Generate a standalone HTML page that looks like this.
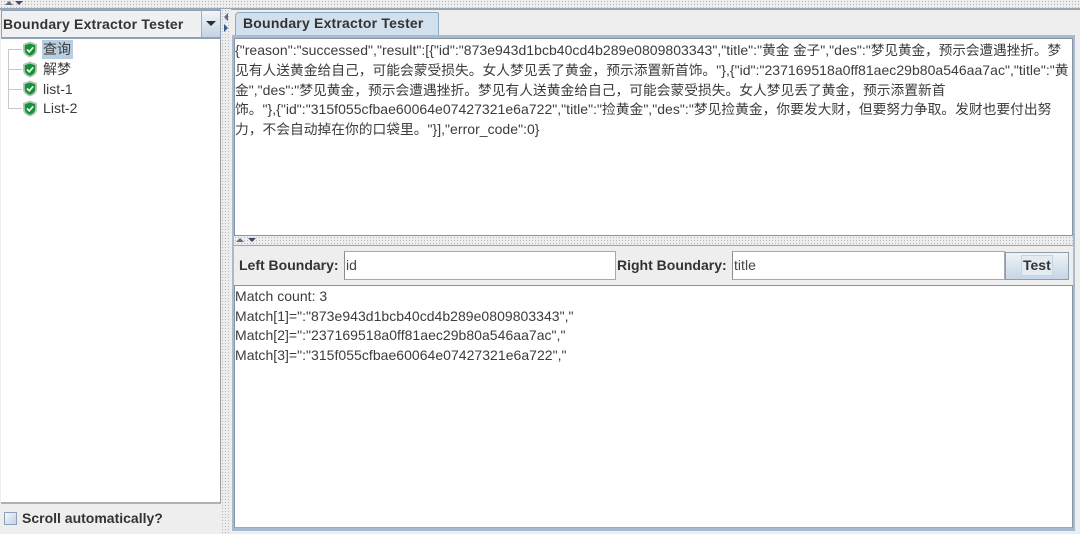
<!DOCTYPE html>
<html><head><meta charset="utf-8">
<style>
html,body{margin:0;padding:0;background:#eeeeee;}
#r{position:relative;width:1080px;height:534px;overflow:hidden;background:#eeeeee;font-family:"Liberation Sans","Noto Sans CJK SC",sans-serif;color:#3a3a3a;}
#r div{position:absolute;box-sizing:border-box;}
.t{white-space:nowrap;font-size:14px;line-height:20px;height:20px;color:#3c3c3c;letter-spacing:.03px;}
.t span{font-size:13.75px;letter-spacing:0;}
.t.a span{font-size:13.6px;}
.b{white-space:nowrap;font-weight:bold;color:#333;}
.dots{background-image:radial-gradient(#b4b8bc 0.7px,transparent 0.8px);background-size:3px 3px;background-color:#eee;}
svg{position:absolute;}
</style></head><body><div id="r">
<div class="dots" style="left:0;top:0;width:1080px;height:9px"></div>
<svg style="left:3px;top:0" width="20" height="6"><path d="M2 5L6 1L10 5Z" fill="#5d6d80"/><path d="M12 1H20L16 5Z" fill="#3d4d68"/></svg>
<div style="left:0;top:8px;width:1080px;height:2px;background:#9aa7b3"></div>
<div style="left:0;top:10px;width:232px;height:524px;background:#eee"></div>

<!-- combo -->
<div style="left:1px;top:10px;width:220px;height:29px;background:#eef0f2;border:1px solid #8ea2b6;border-bottom:2px solid #8ea2b6"></div>
<div class="b" style="left:3px;top:14px;font-size:14px;line-height:20px;letter-spacing:.2px">Boundary Extractor Tester</div>
<div style="left:201px;top:11px;width:19px;height:26px;background:linear-gradient(#f3f5f8,#c3d3e4);border-left:1px solid #9db0c2"></div>
<svg style="left:205px;top:20px" width="12" height="7"><path d="M1 1H11L6 6Z" fill="#2e2e2e"/></svg>

<!-- tree -->
<div style="left:1px;top:39px;width:220px;height:465px;background:#fff;border-right:1px solid #9b9b9b;border-bottom:2px solid #b0b0b0"></div>
<div style="left:8px;top:49px;width:1px;height:60px;background:#c8c8c8"></div>
<div style="left:8px;top:49px;width:14px;height:1px;background:#c8c8c8"></div>
<div style="left:8px;top:69px;width:14px;height:1px;background:#c8c8c8"></div>
<div style="left:8px;top:89px;width:14px;height:1px;background:#c8c8c8"></div>
<div style="left:8px;top:108px;width:14px;height:1px;background:#c8c8c8"></div>
<svg style="left:22px;top:41px" width="16" height="17" viewBox="0 0 16 17"><path d="M8 .5L15 3V9C15 13 11.500 15.500 8 16.500C4.500 15.500 1 13 1 9V3Z" fill="#b9c7b5"/><path d="M8 2.500L13.200 4.300V9C13.200 12 10.700 13.800 8 14.700C5.300 13.800 2.800 12 2.800 9V4.300Z" fill="#14923a"/><path d="M5 8.500L7.300 10.800L11.200 6.300" fill="none" stroke="#e9f7e6" stroke-width="1.800"/></svg>
<svg style="left:22px;top:61px" width="16" height="17" viewBox="0 0 16 17"><path d="M8 .5L15 3V9C15 13 11.500 15.500 8 16.500C4.500 15.500 1 13 1 9V3Z" fill="#b9c7b5"/><path d="M8 2.500L13.200 4.300V9C13.200 12 10.700 13.800 8 14.700C5.300 13.800 2.800 12 2.800 9V4.300Z" fill="#14923a"/><path d="M5 8.500L7.300 10.800L11.200 6.300" fill="none" stroke="#e9f7e6" stroke-width="1.800"/></svg>
<svg style="left:22px;top:80px" width="16" height="17" viewBox="0 0 16 17"><path d="M8 .5L15 3V9C15 13 11.500 15.500 8 16.500C4.500 15.500 1 13 1 9V3Z" fill="#b9c7b5"/><path d="M8 2.500L13.200 4.300V9C13.200 12 10.700 13.800 8 14.700C5.300 13.800 2.800 12 2.800 9V4.300Z" fill="#14923a"/><path d="M5 8.500L7.300 10.800L11.200 6.300" fill="none" stroke="#e9f7e6" stroke-width="1.800"/></svg>
<svg style="left:22px;top:100px" width="16" height="17" viewBox="0 0 16 17"><path d="M8 .5L15 3V9C15 13 11.500 15.500 8 16.500C4.500 15.500 1 13 1 9V3Z" fill="#b9c7b5"/><path d="M8 2.500L13.200 4.300V9C13.200 12 10.700 13.800 8 14.700C5.300 13.800 2.800 12 2.800 9V4.300Z" fill="#14923a"/><path d="M5 8.500L7.300 10.800L11.200 6.300" fill="none" stroke="#e9f7e6" stroke-width="1.800"/></svg>
<div style="left:42px;top:40px;width:31px;height:19px;background:#b9cde0"></div>
<div class="t" style="left:43px;top:39px">查询</div>
<div class="t" style="left:43px;top:59px">解梦</div>
<div class="t" style="left:43px;top:79px">list-1</div>
<div class="t" style="left:43px;top:98px">List-2</div>

<!-- checkbox -->
<div style="left:4px;top:512px;width:13px;height:13px;background:linear-gradient(135deg,#f4f6f9,#c4d3e6);border:1px solid #8da2b8"></div>
<div class="b" style="left:22px;top:508px;font-size:14px;line-height:20px">Scroll automatically?</div>

<!-- vertical divider -->
<div class="dots" style="left:221px;top:9px;width:10px;height:525px"></div>
<svg style="left:222px;top:12px" width="8" height="22"><path d="M6 1V9L2 5Z" fill="#5d6d80"/><path d="M2 12V20L6 16Z" fill="#3d5a90"/></svg>

<!-- tab -->
<div style="left:231px;top:10px;width:849px;height:524px;background:#eee"></div>
<div style="left:235px;top:12px;width:204px;height:25px;background:#d2e0ee;border:1px solid #8ea8c0;border-bottom:0;border-radius:4px 2px 0 0"></div>
<div class="b" style="left:243px;top:13px;font-size:14px;line-height:20px;letter-spacing:.2px">Boundary Extractor Tester</div>
<div style="left:232px;top:35px;width:843px;height:496px;border:2px solid #a6bbd0;border-top:3px solid #a6bbd0;border-bottom:3px solid #a6bbd0"></div>

<!-- text area -->
<div style="left:234px;top:38px;width:839px;height:198px;background:#fff;border:1px solid #8a949e;border-top:1px solid #8a949e"></div>
<div class="t a" style="left:235px;top:40px">{"reason":"successed","result":[{"id":"873e943d1bcb40cd4b289e0809803343","title":"<span>黄金 金子</span>","des":"<span>梦见黄金&#65292;预示会遭遇挫折。梦</span></div>
<div class="t" style="left:235px;top:60px"><span>见有人送黄金给自己&#65292;可能会蒙受损失。女人梦见丢了黄金&#65292;预示添置新首饰。</span>"},{"id":"237169518a0ff81aec29b80a546aa7ac","title":"<span>黄</span></div>
<div class="t" style="left:235px;top:80px"><span>金</span>","des":"<span>梦见黄金&#65292;预示会遭遇挫折。梦见有人送黄金给自己&#65292;可能会蒙受损失。女人梦见丢了黄金&#65292;预示添置新首</span></div>
<div class="t" style="left:235px;top:99px"><span>饰。</span>"},{"id":"315f055cfbae60064e07427321e6a722","title":"<span>捡黄金</span>","des":"<span>梦见捡黄金&#65292;你要发大财&#65292;但要努力争取。发财也要付出努</span></div>
<div class="t" style="left:235px;top:119px"><span>力&#65292;不会自动掉在你的口袋里。</span>"}],"error_code":0}</div>

<!-- splitter -->
<div class="dots" style="left:234px;top:236px;width:839px;height:9px"></div>
<svg style="left:236px;top:237px" width="24" height="6"><path d="M0 5L4 1L8 5Z" fill="#5d6d80"/><path d="M12 1H20L16 5Z" fill="#3d4d68"/></svg>
<div style="left:234px;top:245px;width:839px;height:1px;background:#9aa3ac"></div>

<!-- form row -->
<div class="b" style="left:239px;top:255px;font-size:14px;line-height:20px">Left Boundary:</div>
<div style="left:344px;top:251px;width:272px;height:29px;background:#fff;border:1px solid #a5a9ad;border-left-color:#8a8e92"></div>
<div class="t" style="left:346px;top:255px;color:#444">id</div>
<div class="b" style="left:617px;top:255px;font-size:14px;line-height:20px">Right Boundary:</div>
<div style="left:732px;top:251px;width:273px;height:29px;background:#fff;border:1px solid #a5a9ad;border-left-color:#8a8e92"></div>
<div class="t" style="left:734px;top:255px;color:#444">title</div>
<div style="left:1005px;top:252px;width:64px;height:28px;background:linear-gradient(#f0f3f6,#c5d6e6);border:1px solid #8d9eae"></div>
<div style="left:1021px;top:255px;width:32px;height:21px;background:#e3eaf2;border:1px solid #c8d4e2"></div>
<div class="b" style="left:1023px;top:255px;font-size:14px;line-height:20px">Test</div>

<!-- result area -->
<div style="left:234px;top:285px;width:839px;height:243px;background:#fff;border:1px solid #8a949e;border-bottom-color:#a0a8b0"></div>
<div class="t" style="left:235px;top:286px">Match count: 3</div>
<div class="t" style="left:235px;top:306px">Match[1]=":"873e943d1bcb40cd4b289e0809803343","</div>
<div class="t" style="left:235px;top:325px">Match[2]=":"237169518a0ff81aec29b80a546aa7ac","</div>
<div class="t" style="left:235px;top:345px">Match[3]=":"315f055cfbae60064e07427321e6a722","</div>
</div></body></html>
